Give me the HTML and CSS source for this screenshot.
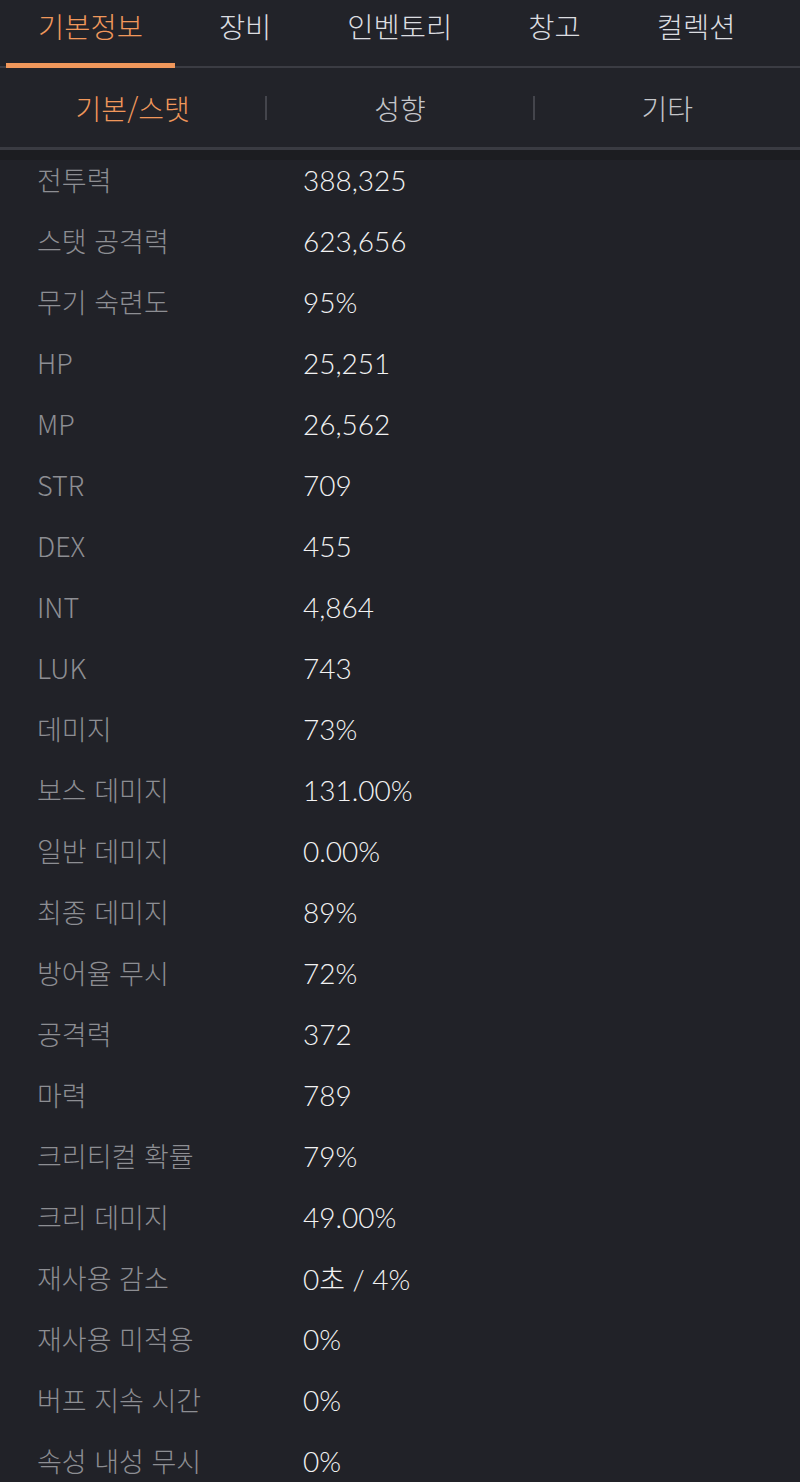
FILE: index.html
```html
<!DOCTYPE html>
<html lang="ko">
<head>
<meta charset="utf-8">
<link rel="stylesheet" href="styles.css">
</head>
<body>
<nav class="tabs">
  <div class="tab active">기본정보</div>
  <div class="tab">장비</div>
  <div class="tab">인벤토리</div>
  <div class="tab">창고</div>
  <div class="tab">컬렉션</div>
</nav>
<nav class="subtabs">
  <div class="subtab active">기본/스탯</div>
  <div class="sep"></div>
  <div class="subtab">성향</div>
  <div class="sep"></div>
  <div class="subtab">기타</div>
</nav>
<div class="shade"></div>
<main class="stats">
  <div class="row"><span class="label">전투력</span><span class="value">388,325</span></div>
  <div class="row"><span class="label">스탯 공격력</span><span class="value">623,656</span></div>
  <div class="row"><span class="label">무기 숙련도</span><span class="value">95%</span></div>
  <div class="row"><span class="label">HP</span><span class="value">25,251</span></div>
  <div class="row"><span class="label">MP</span><span class="value">26,562</span></div>
  <div class="row"><span class="label">STR</span><span class="value">709</span></div>
  <div class="row"><span class="label">DEX</span><span class="value">455</span></div>
  <div class="row"><span class="label">INT</span><span class="value">4,864</span></div>
  <div class="row"><span class="label">LUK</span><span class="value">743</span></div>
  <div class="row"><span class="label">데미지</span><span class="value">73%</span></div>
  <div class="row"><span class="label">보스 데미지</span><span class="value">131.00%</span></div>
  <div class="row"><span class="label">일반 데미지</span><span class="value">0.00%</span></div>
  <div class="row"><span class="label">최종 데미지</span><span class="value">89%</span></div>
  <div class="row"><span class="label">방어율 무시</span><span class="value">72%</span></div>
  <div class="row"><span class="label">공격력</span><span class="value">372</span></div>
  <div class="row"><span class="label">마력</span><span class="value">789</span></div>
  <div class="row"><span class="label">크리티컬 확률</span><span class="value">79%</span></div>
  <div class="row"><span class="label">크리 데미지</span><span class="value">49.00%</span></div>
  <div class="row"><span class="label">재사용 감소</span><span class="value">0초 / 4%</span></div>
  <div class="row"><span class="label">재사용 미적용</span><span class="value">0%</span></div>
  <div class="row"><span class="label">버프 지속 시간</span><span class="value">0%</span></div>
  <div class="row"><span class="label">속성 내성 무시</span><span class="value">0%</span></div>
</main>
</body>
</html>
```
FILE: styles.css
```css
html, body {
  margin: 0;
  padding: 0;
  background: #212228;
}
body {
  width: 800px;
  height: 1482px;
  overflow: hidden;
  font-family: "Noto Sans CJK KR", "Noto Sans", sans-serif;
  font-weight: 300;
}
.tabs {
  display: flex;
  gap: 12px;
  padding-left: 6px;
  height: 66px;
  border-bottom: 2px solid #3b3c43;
  background: #222329;
}
.tab {
  position: relative;
  padding: 0 32px;
  font-size: 28.5px;
  line-height: 52px;
  color: #dcdde0;
}
.tab.active {
  color: #f0975b;
}
.tab.active::after {
  content: "";
  position: absolute;
  left: 0;
  right: 0;
  bottom: -2px;
  height: 5px;
  background: #f0975b;
}
.subtabs {
  display: flex;
  align-items: center;
  height: 79px;
  border-bottom: 3px solid #3a3b42;
  background: #222329;
}
.subtab {
  flex: 1;
  text-align: center;
  font-size: 28px;
  line-height: 78px;
  color: #c4c5c9;
}
.subtab.active {
  color: #f0975b;
}
.sep {
  width: 2px;
  height: 24px;
  background: #44454c;
}
.shade {
  height: 10px;
  background: #1c1d21;
}
.stats {
  display: flex;
  flex-direction: column;
  margin-top: -11px;
}
.row {
  display: flex;
  align-items: center;
  height: 61px;
  padding-left: 37px;
}
.label {
  width: 266px;
  font-size: 27px;
  color: #8d8e93;
}
.value {
  font-family: "Lato", "Noto Sans CJK KR", sans-serif;
  font-weight: 300;
  font-size: 28px;
  color: #f2f2f3;
}
```
